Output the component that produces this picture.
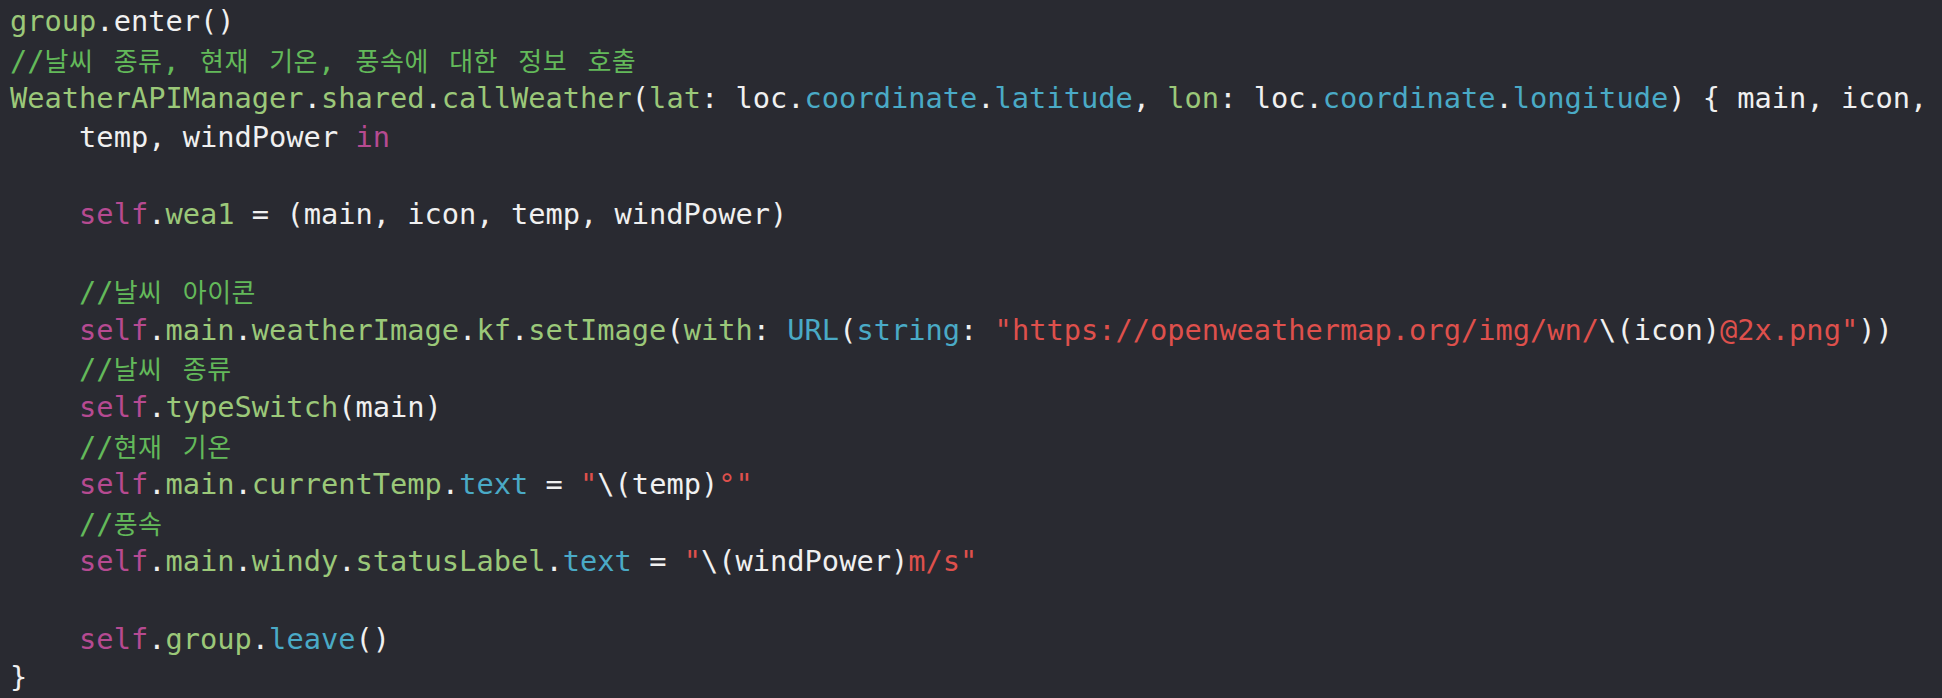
import React from "react";

type Tok = [string, string];

const C = {
  w: "text-[#f0f0f0]",
  g: "text-[#9bc879]",
  c: "text-[#4aaac6]",
  k: "text-[#b64a91]",
  s: "text-[#de504c]",
  m: "text-[#63b95a]",
};

const Hangul = ({ text }: { text: string }) => (
  <>
    {text.split(/([\uAC00-\uD7A3]+)/).map((part, i) =>
      /[\uAC00-\uD7A3]/.test(part) ? (
        <span key={i} className="font-['Noto_Sans_CJK_KR',sans-serif] text-[26px] tracking-[0.5px]">
          {part}
        </span>
      ) : (
        <span key={i} className="[word-spacing:3px]">{part}</span>
      )
    )}
  </>
);

const lines: (Tok[] | null)[] = [
  [["g", "group"], ["w", ".enter()"]],
  [["m", "//날씨 종류, 현재 기온, 풍속에 대한 정보 호출"]],
  [
    ["g", "WeatherAPIManager"], ["w", "."], ["g", "shared"], ["w", "."], ["g", "callWeather"],
    ["w", "("], ["g", "lat"], ["w", ": loc."], ["c", "coordinate"], ["w", "."], ["c", "latitude"],
    ["w", ", "], ["g", "lon"], ["w", ": loc."], ["c", "coordinate"], ["w", "."], ["c", "longitude"],
    ["w", ") { main, icon,"],
  ],
  [["w", "    temp, windPower "], ["k", "in"]],
  null,
  [["w", "    "], ["k", "self"], ["w", "."], ["g", "wea1"], ["w", " = (main, icon, temp, windPower)"]],
  null,
  [["w", "    "], ["m", "//날씨 아이콘"]],
  [
    ["w", "    "], ["k", "self"], ["w", "."], ["g", "main"], ["w", "."], ["g", "weatherImage"], ["w", "."],
    ["g", "kf"], ["w", "."], ["g", "setImage"], ["w", "("], ["g", "with"], ["w", ": "], ["c", "URL"],
    ["w", "("], ["c", "string"], ["w", ": "], ["s", "\"https://openweathermap.org/img/wn/"],
    ["w", "\\(icon)"], ["s", "@2x.png\""], ["w", "))"],
  ],
  [["w", "    "], ["m", "//날씨 종류"]],
  [["w", "    "], ["k", "self"], ["w", "."], ["g", "typeSwitch"], ["w", "(main)"]],
  [["w", "    "], ["m", "//현재 기온"]],
  [
    ["w", "    "], ["k", "self"], ["w", "."], ["g", "main"], ["w", "."], ["g", "currentTemp"], ["w", "."],
    ["c", "text"], ["w", " = "], ["s", "\""], ["w", "\\(temp)"], ["s", "°\""],
  ],
  [["w", "    "], ["m", "//풍속"]],
  [
    ["w", "    "], ["k", "self"], ["w", "."], ["g", "main"], ["w", "."], ["g", "windy"], ["w", "."],
    ["g", "statusLabel"], ["w", "."], ["c", "text"], ["w", " = "], ["s", "\""], ["w", "\\(windPower)"],
    ["s", "m/s\""],
  ],
  null,
  [["w", "    "], ["k", "self"], ["w", "."], ["g", "group"], ["w", "."], ["c", "leave"], ["w", "()"]],
  [["w", "}"]],
];

export default function App() {
  return (
    <div className="w-[1942px] h-[698px] overflow-hidden bg-[#292a31] pl-[10px] pt-[2px] font-['DejaVu_Sans_Mono',monospace] text-[28.7px] leading-[38.6px] whitespace-pre">
      {lines.map((line, i) => (
        <div key={i} className="h-[38.6px]">
          {line?.map(([color, text], j) => (
            <span key={j} className={C[color as keyof typeof C]}>
              {color === "m" ? <Hangul text={text} /> : text}
            </span>
          ))}
        </div>
      ))}
    </div>
  );
}
